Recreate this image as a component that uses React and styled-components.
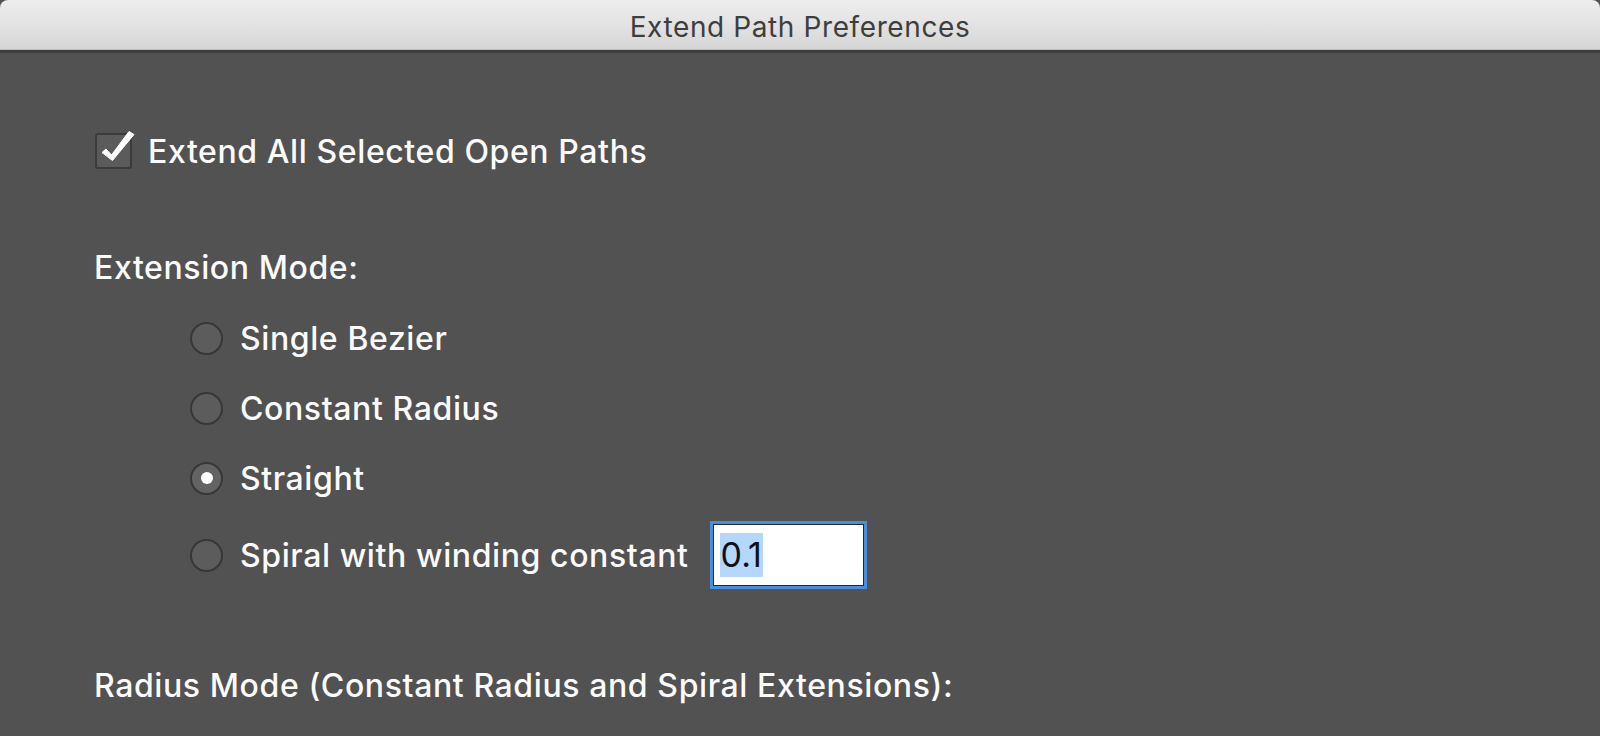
import React from "react";
import styled, { createGlobalStyle } from "styled-components";

const GlobalStyle = createGlobalStyle`
  html, body {
    margin: 0;
    padding: 0;
    background: #525252;
  }
  body {
    font-family: Inter, "Liberation Sans", sans-serif;
    overflow: hidden;
  }
`;

const modes = [
  { label: "Single Bezier", checked: false },
  { label: "Constant Radius", checked: false },
  { label: "Straight", checked: true },
  { label: "Spiral with winding constant", checked: false, field: "0.1" },
];

const App = () => {
  return (
    <Window>
      <GlobalStyle />
      <TitleBar>Extend Path Preferences</TitleBar>
      <Content>
        <CheckRow>
          <CheckBox>
            <svg width="37" height="36" viewBox="0 0 37 36">
              <path
                d="M7 19.5 L11 16 L16.5 22 L34 -1.5 L39 1.5 L17.5 27.5 Z"
                fill="#ffffff"
                stroke="#ffffff"
                strokeWidth="1"
                strokeLinejoin="round"
              />
            </svg>
          </CheckBox>
          <Label>Extend All Selected Open Paths</Label>
        </CheckRow>

        <SectionLabel>Extension Mode:</SectionLabel>
        <RadioList>
          {modes.map((m) => (
            <RadioRow key={m.label} $tall={!!m.field}>
              <Radio $checked={m.checked} />
              <Label>{m.label}</Label>
              {m.field && (
                <NumberField>
                  <Selected>{m.field}</Selected>
                </NumberField>
              )}
            </RadioRow>
          ))}
        </RadioList>

        <SectionLabel $bottom>
          Radius Mode (Constant Radius and Spiral Extensions):
        </SectionLabel>
      </Content>
    </Window>
  );
};

const Window = styled.div`
  width: 1600px;
  height: 736px;
  background: #525252;
  display: flex;
  flex-direction: column;
`;

const TitleBar = styled.div`
  height: 53px;
  flex-shrink: 0;
  display: flex;
  align-items: center;
  justify-content: center;
  padding-top: 3px;
  background: linear-gradient(#eeeeee, #d6d6d6);
  border-bottom: 3px solid #3e3e3e;
  box-shadow: inset 0 -1px 0 #bdbdbd;
  box-sizing: border-box;
  color: #3e3e3e;
  font-size: 28px;
  letter-spacing: 0.6px;
  border-radius: 8px 8px 0 0;
`;

const Content = styled.div`
  display: flex;
  flex-direction: column;
  padding: 80px 0 0 94px;
  color: #fbfbfb;
`;

const Label = styled.span`
  font-size: 32px;
  font-weight: 500;
  letter-spacing: 0.6px;
  color: #fbfbfb;
  white-space: nowrap;
`;

const CheckRow = styled.div`
  display: flex;
  align-items: center;
  height: 36px;
  gap: 16px;
  margin-left: 1px;
`;

const CheckBox = styled.div`
  position: relative;
  width: 37px;
  height: 36px;
  box-sizing: border-box;
  background: #5b5b5b;
  border: 2px solid #3b3b3b;
  border-radius: 3px;
  svg {
    position: absolute;
    left: -2px;
    top: -2px;
    overflow: visible;
  }
`;

const SectionLabel = styled.div`
  font-size: 32px;
  font-weight: 500;
  letter-spacing: 0.6px;
  height: 40px;
  display: flex;
  align-items: center;
  white-space: nowrap;
  margin-top: ${(p) => (p.$bottom ? "68px" : "78px")};
`;

const RadioList = styled.div`
  display: flex;
  flex-direction: column;
  padding-left: 96px;
  margin-top: 16px;
`;

const RadioRow = styled.div`
  display: flex;
  align-items: center;
  height: ${(p) => (p.$tall ? "84px" : "70px")};
  gap: 17px;
`;

const Radio = styled.div`
  width: 33px;
  height: 33px;
  flex-shrink: 0;
  box-sizing: border-box;
  border-radius: 50%;
  background: ${(p) => (p.$checked ? "#636363" : "#5c5c5c")};
  border: 2px solid #373737;
  display: flex;
  align-items: center;
  justify-content: center;
  &::after {
    content: "";
    display: ${(p) => (p.$checked ? "block" : "none")};
    width: 12px;
    height: 12px;
    border-radius: 50%;
    background: #ffffff;
  }
`;

const NumberField = styled.div`
  width: 157px;
  height: 68px;
  flex-shrink: 0;
  box-sizing: border-box;
  margin-left: 4px;
  background: #ffffff;
  border: 3px solid #4a8edb;
  box-shadow: inset 0 0 0 1px #1e2a38;
  display: flex;
  align-items: center;
  padding-left: 7px;
`;

const Selected = styled.span`
  background: #b3d7ff;
  color: #111111;
  font-size: 34px;
  line-height: 44px;
  padding: 0 1px;
`;

export default App;
